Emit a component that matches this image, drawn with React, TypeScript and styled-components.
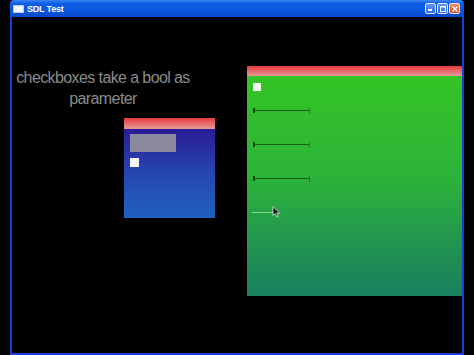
import React from 'react';
import styled, { createGlobalStyle } from 'styled-components';

const Global = createGlobalStyle`
    html, body {
        margin: 0;
        padding: 0;
        background: #000;
        height: 355px;
        overflow: hidden;
    }
`

const Screen = styled.div`
    width: 474px;
    height: 355px;
    background: #020104;
    padding-left: 10px;
    box-sizing: border-box;
`

const Window = styled.div`
    width: 454px;
    height: 355px;
    display: flex;
    flex-direction: column;
`

const TitleBar = styled.div`
    height: 17px;
    flex: none;
    display: flex;
    align-items: center;
    padding: 0 4px 0 3px;
    background: linear-gradient(#3d86f2 0%, #0d5ee6 20%, #0a55dc 70%, #0a48c6 100%);
    border-radius: 4px 4px 0 0;
`

const AppIcon = styled.div`
    width: 9px;
    height: 6px;
    background: #f4f6ff;
    border: 1px solid #b8c8f0;
    margin-right: 3px;
`

const Title = styled.span`
    color: #fff;
    font-family: "Liberation Sans", Arial, sans-serif;
    font-size: 9px;
    font-weight: bold;
    letter-spacing: -0.2px;
    flex: 1;
`

const Buttons = styled.div`
    display: flex;
    gap: 1px;
`

const WinButton = styled.div<{ $close?: boolean }>`
    width: 11px;
    height: 11px;
    border-radius: 2px;
    border: 1px solid #dfe8ff;
    box-sizing: border-box;
    background: ${p => p.$close
        ? 'linear-gradient(#f08a60, #d8501f)'
        : 'linear-gradient(#5f95ff, #2a6af0)'};
    display: flex;
    align-items: center;
    justify-content: center;
`

const Client = styled.div`
    flex: 1;
    background: #000;
    border: 2px solid #1840d8;
    border-top: none;
    display: flex;
    align-items: flex-start;
`

const LeftColumn = styled.div`
    width: 182px;
    padding-top: 50px;
    display: flex;
    flex-direction: column;
`

const Caption = styled.div`
    font-family: "Liberation Sans", Arial, sans-serif;
    font-size: 16px;
    letter-spacing: -0.6px;
    line-height: 21px;
    color: #8a8a8a;
    text-align: center;
    white-space: nowrap;
`

const Panel = styled.div<{ $w: number; $h: number }>`
    width: ${p => p.$w}px;
    height: ${p => p.$h}px;
    display: flex;
    flex-direction: column;
    flex: none;
`

const PanelHeader = styled.div<{ $h: number }>`
    height: ${p => p.$h}px;
    flex: none;
    background: linear-gradient(#e83a3a, #e49a98);
`

const SmallPanel = styled(Panel)`
    margin: 9px 0 0 112px;
`

const SmallBody = styled.div`
    flex: 1;
    background: linear-gradient(#2a1c96, #2647b0 50%, #1f62bc);
    padding: 5px 6px;
    display: flex;
    flex-direction: column;
    gap: 6px;
`

const TextField = styled.div`
    width: 46px;
    height: 18px;
    background: #8a8a9c;
`

const CheckBox = styled.div<{ $size: number }>`
    width: ${p => p.$size}px;
    height: ${p => p.$size}px;
    background: #f6f6f6;
`

const BigPanel = styled(Panel)`
    margin: 49px 0 0 auto;
`

const BigBody = styled.div`
    flex: 1;
    background: linear-gradient(#34c424 0%, #2db43a 45%, #1f9150 80%, #1a8060 100%);
    padding: 7px 6px;
    display: flex;
    flex-direction: column;
`

const SliderList = styled.div`
    margin-top: 16px;
    display: flex;
    flex-direction: column;
    gap: 26px;
`

const Slider = styled.div<{ $faint?: boolean }>`
    position: relative;
    width: ${p => p.$faint ? 22 : 57}px;
    height: 8px;
    margin-left: ${p => p.$faint ? -1 : 0}px;
    &::before {
        content: '';
        position: absolute;
        left: 0;
        right: 0;
        top: 3px;
        height: 1px;
        background: ${p => p.$faint ? '#8fd39a' : '#17601c'};
    }
`

const Thumb = styled.div`
    position: absolute;
    left: 0;
    top: 1px;
    width: 2px;
    height: 5px;
    background: #124f16;
`

const EndTick = styled.div`
    position: absolute;
    right: 0;
    top: 1px;
    width: 1px;
    height: 6px;
    background: #2a7a2a;
`

const Cursor = styled.svg`
    position: absolute;
    left: 20px;
    top: -3px;
`

function App() {
    return (
        <Screen>
            <Global />
            <Window>
                <TitleBar>
                    <AppIcon />
                    <Title>SDL Test</Title>
                    <Buttons>
                        <WinButton>
                            <svg width="5" height="5" viewBox="0 0 5 5"><rect x="0" y="3" width="4" height="2" fill="#fff" /></svg>
                        </WinButton>
                        <WinButton>
                            <svg width="6" height="6" viewBox="0 0 6 6"><rect x="0.5" y="0.5" width="5" height="5" fill="none" stroke="#fff" /><rect x="0" y="0" width="6" height="1.5" fill="#fff" /></svg>
                        </WinButton>
                        <WinButton $close>
                            <svg width="6" height="6" viewBox="0 0 6 6"><path d="M0.5 0.5 L5.5 5.5 M5.5 0.5 L0.5 5.5" stroke="#fff" strokeWidth="1.4" /></svg>
                        </WinButton>
                    </Buttons>
                </TitleBar>
                <Client>
                    <LeftColumn>
                        <Caption>
                            checkboxes take a bool as<br />parameter
                        </Caption>
                        <SmallPanel $w={91} $h={100}>
                            <PanelHeader $h={11} />
                            <SmallBody>
                                <TextField />
                                <CheckBox $size={9} />
                            </SmallBody>
                        </SmallPanel>
                    </LeftColumn>

                    <BigPanel $w={215} $h={230}>
                        <PanelHeader $h={10} />
                        <BigBody>
                            <CheckBox $size={8} />
                            <SliderList>
                                <Slider><Thumb /><EndTick /></Slider>
                                <Slider><Thumb /><EndTick /></Slider>
                                <Slider><Thumb /><EndTick /></Slider>
                                <Slider $faint>
                                    <Cursor width="9" height="12" viewBox="0 0 9 12">
                                        <path d="M1 0.5 L1 9.5 L3.2 7.6 L4.8 11 L6.2 10.4 L4.7 7.1 L7.6 7.1 Z" fill="#111" stroke="#e8e8e8" strokeWidth="0.8" />
                                    </Cursor>
                                </Slider>
                            </SliderList>
                        </BigBody>
                    </BigPanel>
                </Client>
            </Window>
        </Screen>
    )
}

export default App;
